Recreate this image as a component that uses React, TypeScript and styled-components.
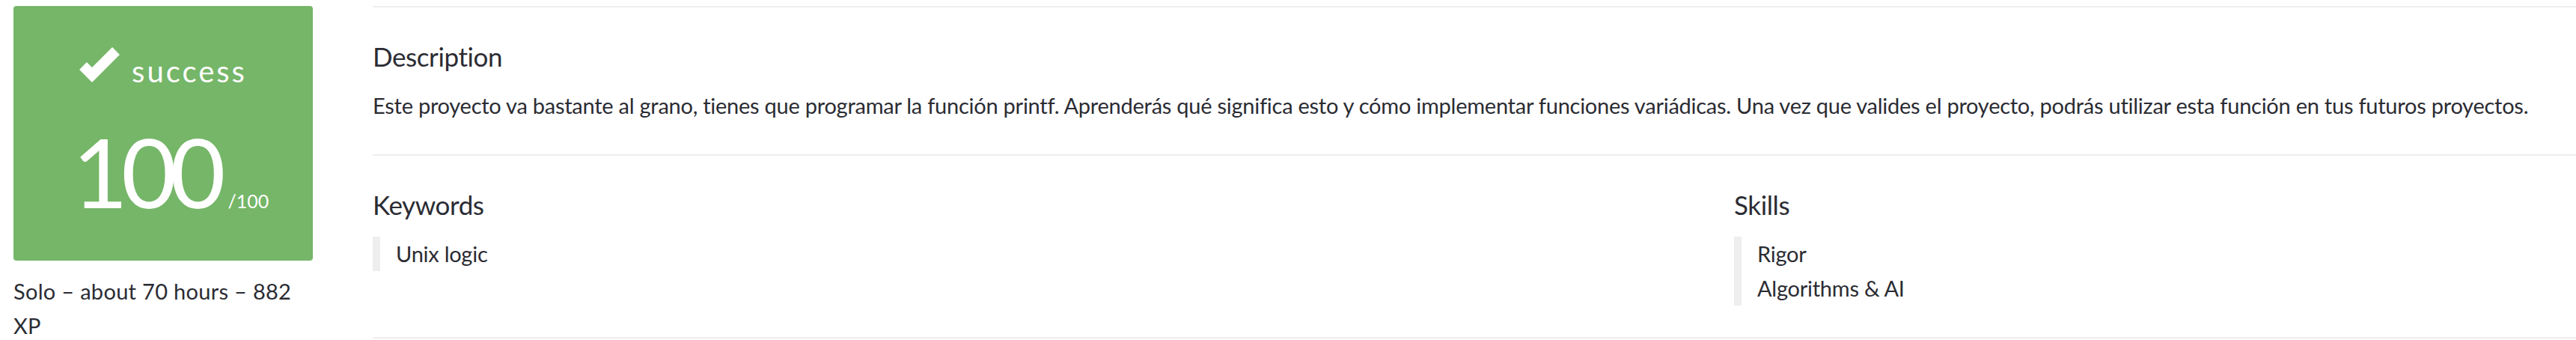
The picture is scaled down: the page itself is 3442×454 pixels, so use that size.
import styled, { createGlobalStyle } from "styled-components";

const GlobalStyle = createGlobalStyle`
  body {
    margin: 0;
    background: #fff;
    font-family: "Lato", "Liberation Sans", sans-serif;
    color: #2b2c33;
  }
`;

interface sectionList {
  title: string;
  items: string[];
}

const lists: sectionList[] = [
  { title: "Keywords", items: ["Unix logic"] },
  { title: "Skills", items: ["Rigor", "Algorithms & AI"] },
];

function CheckIcon() {
  return (
    <CheckSvg viewBox="0 0 55 47" width="55" height="47">
      <polyline
        points="5,25 17,37 49,5"
        fill="none"
        stroke="#fff"
        strokeWidth="14"
        strokeLinejoin="miter"
      />
    </CheckSvg>
  );
}

export default function App() {
  return (
    <>
      <GlobalStyle />
      <Page>
        <Sidebar>
          <ScoreCard>
            <Status>
              <CheckIcon />
              <StatusLabel>success</StatusLabel>
            </Status>
            <Mark>
              100<MaxMark>/100</MaxMark>
            </Mark>
          </ScoreCard>
          <Meta>Solo – about 70 hours – 882 XP</Meta>
        </Sidebar>
        <Main>
          <Section>
            <Heading>Description</Heading>
            <Text>
              Este proyecto va bastante al grano, tienes que programar la función
              printf. Aprenderás qué significa esto y cómo implementar funciones
              variádicas. Una vez que valides el proyecto, podrás utilizar esta
              función en tus futuros proyectos.
            </Text>
          </Section>
          <Section>
            <Columns>
              {lists.map((list) => (
                <div key={list.title}>
                  <Heading>{list.title}</Heading>
                  <TagList>
                    {list.items.map((item) => (
                      <Tag key={item}>{item}</Tag>
                    ))}
                  </TagList>
                </div>
              ))}
            </Columns>
          </Section>
        </Main>
      </Page>
    </>
  );
}

const Page = styled.div`
  display: flex;
  gap: 80px;
  padding: 8px 0 0 18px;
  overflow: hidden;
`;

const Sidebar = styled.aside`
  width: 400px;
  flex-shrink: 0;
`;

const ScoreCard = styled.div`
  height: 340px;
  box-sizing: border-box;
  padding-top: 55px;
  background-color: rgb(117, 182, 104);
  border-radius: 4px;
  color: #fff;
  display: flex;
  flex-direction: column;
  align-items: center;
`;

const Status = styled.div`
  display: flex;
  align-items: baseline;
  gap: 15px;
`;

const CheckSvg = styled.svg`
  display: block;
`;

const StatusLabel = styled.span`
  font-size: 40px;
  line-height: 1;
  letter-spacing: 3px;
`;

const Mark = styled.div`
  margin-top: 50px;
  margin-left: 20px;
  font-size: 128px;
  line-height: 1;
  letter-spacing: -9px;
  font-weight: 400;
`;

const MaxMark = styled.span`
  font-size: 25px;
  letter-spacing: 0;
  margin-left: 12px;
`;

const Meta = styled.p`
  margin: 18px 0 0;
  max-width: 372px;
  font-size: 29px;
  line-height: 46px;
  letter-spacing: 0.3px;
`;

const Main = styled.main`
  flex: 1;
  min-width: 0;
`;

const Section = styled.section`
  border-top: 2px solid #eee;
  padding: 44px 0 42px;

  &:last-child {
    border-bottom: 2px solid #eee;
  }
`;

const Heading = styled.h4`
  margin: 0 0 22px;
  font-size: 35px;
  line-height: 42px;
  font-weight: 400;
  letter-spacing: -0.4px;
`;

const Text = styled.p`
  margin: 0;
  font-size: 29px;
  line-height: 46px;
  letter-spacing: -0.25px;
`;

const Columns = styled.div`
  display: grid;
  grid-template-columns: 1819px 1fr;
`;

const TagList = styled.ul`
  margin: 0;
  padding: 0 0 0 21px;
  list-style: none;
  border-left: 10px solid #eee;
`;

const Tag = styled.li`
  font-size: 29px;
  line-height: 46px;
  letter-spacing: -0.25px;
`;
